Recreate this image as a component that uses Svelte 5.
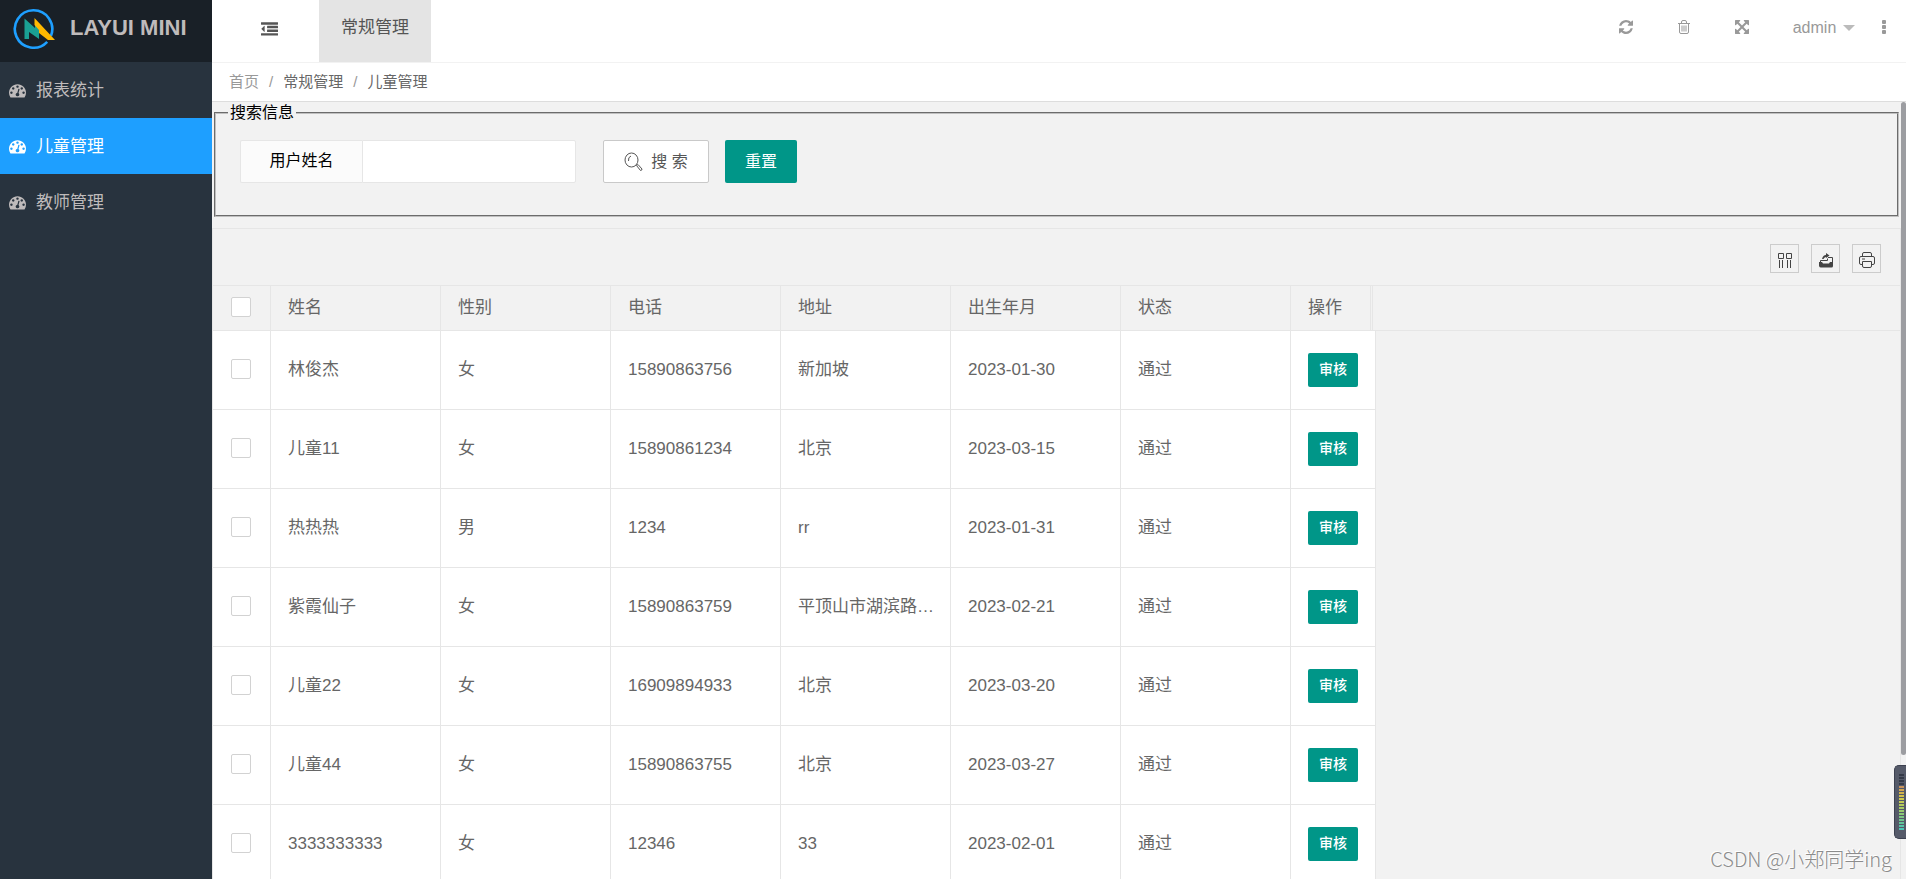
<script lang="ts">
  interface Child {
    id: number;
    name: string;
    sex: string;
    phone: string;
    address: string;
    birthday: string;
    status: string;
  }

  const menus = ['报表统计', '儿童管理', '教师管理'];
  const columns = ['姓名', '性别', '电话', '地址', '出生年月', '状态'];

  let activeMenu = '儿童管理';
  let keyword = '';
  let filter = '';
  let selected: number[] = [];

  let children: Child[] = [
    { id: 1, name: '林俊杰', sex: '女', phone: '15890863756', address: '新加坡', birthday: '2023-01-30', status: '通过' },
    { id: 2, name: '儿童11', sex: '女', phone: '15890861234', address: '北京', birthday: '2023-03-15', status: '通过' },
    { id: 3, name: '热热热', sex: '男', phone: '1234', address: 'rr', birthday: '2023-01-31', status: '通过' },
    { id: 4, name: '紫霞仙子', sex: '女', phone: '15890863759', address: '平顶山市湖滨路1号', birthday: '2023-02-21', status: '通过' },
    { id: 5, name: '儿童22', sex: '女', phone: '16909894933', address: '北京', birthday: '2023-03-20', status: '通过' },
    { id: 6, name: '儿童44', sex: '女', phone: '15890863755', address: '北京', birthday: '2023-03-27', status: '通过' },
    { id: 7, name: '3333333333', sex: '女', phone: '12346', address: '33', birthday: '2023-02-01', status: '通过' }
  ];

  $: rows = children.filter(c => c.name.includes(filter));
  $: allChecked = rows.length > 0 && rows.every(r => selected.includes(r.id));

  function search() {
    filter = keyword;
  }

  function reset() {
    keyword = '';
    filter = '';
  }

  function toggleAll() {
    selected = allChecked ? [] : rows.map(r => r.id);
  }

  function approve(id: number) {
    children = children.map(c => c.id === id ? { ...c, status: '通过' } : c);
  }

  // level meter, top to bottom
  const bars = [
    '#343a48', '#343a48', '#343a48', '#343a48', '#c9935c', '#d0a552', '#d2b34b',
    '#d3c04a', '#cfc94d', '#c3cc54', '#b5cd5c', '#a9cc65', '#9acb6e', '#8bc977', '#7cc782',
    '#6fc58d', '#62c49a', '#56c4a8', '#4dc6b6'
  ];
</script>

<div class="layout">
  <aside class="side">
    <a class="logo" href="#home">
      <svg width="44" height="44" viewBox="0 0 44 44">
        <path d="M35.2 35.8A18.7 18.7 0 1 1 38.9 30" fill="none" stroke="#1e9fff" stroke-width="2.6" />
        <path d="M12.5 12.5L23 22V18L27 23V33L17 26V33H12.5Z" fill="#1aa094" />
        <path d="M22.5 12L43 34H36L27 27V24L22.5 19Z" fill="#ffb800" />
      </svg>
      <h1>LAYUI MINI</h1>
    </a>
    <nav>
      {#each menus as menu}
        <a class="menu" class:active={menu === activeMenu} href="#{menu}" on:click={() => activeMenu = menu}>
          <svg width="17" height="17" viewBox="0 128 1792 1792" fill="currentColor">
            <path d="M384 1152q0-53-37.5-90.5t-90.5-37.5-90.5 37.5-37.5 90.5 37.5 90.5 90.5 37.5 90.5-37.5 37.5-90.5zm192-448q0-53-37.5-90.5t-90.5-37.5-90.5 37.5-37.5 90.5 37.5 90.5 90.5 37.5 90.5-37.5 37.5-90.5zm428 481l101-382q6-26-7.5-48.5t-38.5-29.5-48 6.5-30 39.5l-101 382q-60 5-107 43.5t-63 98.5q-20 77 20 146t117 89 146-20 89-117q16-60-6-117t-72-91zm660-33q0-53-37.5-90.5t-90.5-37.5-90.5 37.5-37.5 90.5 37.5 90.5 90.5 37.5 90.5-37.5 37.5-90.5zm-640-640q0-53-37.5-90.5t-90.5-37.5-90.5 37.5-37.5 90.5 37.5 90.5 90.5 37.5 90.5-37.5 37.5-90.5zm448 192q0-53-37.5-90.5t-90.5-37.5-90.5 37.5-37.5 90.5 37.5 90.5 90.5 37.5 90.5-37.5 37.5-90.5zm320 448q0 261-141 483-19 29-54 29h-1402q-35 0-54-29-141-221-141-483 0-182 71-348t191-286 286-191 348-71 348 71 286 191 191 286 71 348z" />
          </svg>
          <span>{menu}</span>
        </a>
      {/each}
    </nav>
  </aside>

  <div class="main">
    <header class="header">
      <button class="fold" aria-label="收起菜单">
        <svg width="17" height="17" viewBox="0 0 1792 1792" fill="currentColor">
          <path d="M384 544v576q0 13-9.5 22.5t-22.5 9.5q-14 0-23-9l-288-288q-9-9-9-23t9-23l288-288q9-9 23-9 13 0 22.5 9.5t9.5 22.5z" />
          <rect y="128" width="1792" height="256" rx="32" />
          <rect x="640" y="512" width="1152" height="256" rx="32" />
          <rect x="640" y="896" width="1152" height="256" rx="32" />
          <rect y="1280" width="1792" height="256" rx="32" />
        </svg>
      </button>
      <a class="tab" href="#normal">常规管理</a>
      <div class="tools">
        <button class="tool" aria-label="刷新">
          <svg width="14" height="14" viewBox="0 0 1536 1536" fill="currentColor">
            <path d="M1511 928q0 5-1 7-64 268-268 434.5t-478 166.5q-146 0-282.5-55t-243.5-157l-129 129q-19 19-45 19t-45-19-19-45v-448q0-26 19-45t45-19h448q26 0 45 19t19 45-19 45l-137 137q71 66 161 102t187 36q134 0 250-65t186-179q11-17 53-117 8-23 30-23h192q13 0 22.5 9.5t9.5 22.5zm25-800v448q0 26-19 45t-45 19h-448q-26 0-45-19t-19-45 19-45l138-138q-148-137-349-137-134 0-250 65t-186 179q-11 17-53 117-8 23-30 23h-199q-13 0-22.5-9.5t-9.5-22.5v-7q65-268 270-434.5t480-166.5q146 0 284 55.5t245 156.5l130-129q19-19 45-19t45 19 19 45z" />
          </svg>
        </button>
        <button class="tool" aria-label="清理">
          <svg width="14" height="14" viewBox="0 0 14 14" fill="none" stroke="currentColor">
            <path d="M1 3.5H13M4.5 3.5V2Q4.5.5 6 .5H8Q9.5.5 9.5 2V3.5M2.5 3.5V12Q2.5 13.5 4 13.5H10Q11.5 13.5 11.5 12V3.5M5 5.5V11.5M7 5.5V11.5M9 5.5V11.5" />
          </svg>
        </button>
        <button class="tool" aria-label="全屏">
          <svg width="14" height="14" viewBox="128 128 1536 1536" fill="currentColor">
            <path d="M1411 541l-355 355 355 355 144-144q29-31 70-14 39 17 39 59v448q0 26-19 45t-45 19h-448q-42 0-59-40-17-39 14-69l144-144-355-355-355 355 144 144q31 30 14 69-17 40-59 40h-448q-26 0-45-19t-19-45v-448q0-42 40-59 39-17 69 14l144 144 355-355-355-355-144 144q-19 19-45 19-12 0-24-5-40-17-40-59v-448q0-26 19-45t45-19h448q42 0 59 40 17 39-14 69l-144 144 355 355 355-355-144-144q-31-30-14-69 17-40 59-40h448q26 0 45 19t19 45v448q0 42-39 59-13 5-25 5-26 0-45-19z" />
          </svg>
        </button>
        <button class="user">admin <i class="caret"></i></button>
        <button class="more" aria-label="更多">
          <svg width="4" height="14" viewBox="0 0 4 14" fill="currentColor">
            <rect width="4" height="4" rx="1" />
            <rect y="5" width="4" height="4" rx="1" />
            <rect y="10" width="4" height="4" rx="1" />
          </svg>
        </button>
      </div>
    </header>

    <div class="crumbs">
      <a class="home" href="#home">首页</a>
      <span>/</span>
      <a href="#normal">常规管理</a>
      <span>/</span>
      <a href="#children">儿童管理</a>
    </div>

    <div class="body">
      <div class="page">
        <fieldset>
          <legend>搜索信息</legend>
          <form class="search" on:submit|preventDefault={search}>
            <label for="username">用户姓名</label>
            <input id="username" type="text" autocomplete="off" bind:value={keyword} />
            <button class="btn-search" type="submit">
              <svg width="19" height="19" viewBox="0 0 19 19" fill="none" stroke="currentColor">
                <ellipse cx="7.5" cy="8" rx="6.5" ry="7" />
                <path d="M4.5 9Q4 5 7 4M12.5 13.5L14 12.5L18 17Q18 18.5 16.5 18.5Z" />
              </svg>
              搜 索
            </button>
            <button class="btn-reset" type="button" on:click={reset}>重置</button>
          </form>
        </fieldset>

        <div class="table-view">
          <div class="toolbar">
            <button aria-label="筛选列">
              <svg width="16" height="16" viewBox="0 0 16 16" fill="none" stroke="currentColor">
                <path d="M1.5 1.5H6.5V6.5H1.5ZM9.5 1.5H14.5V6.5H9.5ZM2.5 8V16M5.5 8V16M10.5 8V16M13.5 8V16" />
              </svg>
            </button>
            <button aria-label="导出">
              <svg width="16" height="16" viewBox="0 0 16 16" fill="currentColor">
                <path d="M1 10H4L5 11.5H11L12 10H15V14Q15 15.5 13.5 15.5H3Q1.5 15.5 1 14Z" />
                <path d="M4 7Q5 3 8 3V1L11.5 3.5L8 6V5Q6 5.500 5.5 7Z" />
                <path d="M2.5 10V8.5H9.5V6.500M10 5.5H14.5V10" fill="none" stroke="currentColor" />
              </svg>
            </button>
            <button aria-label="打印">
              <svg width="16" height="16" viewBox="0 0 16 16" fill="none" stroke="currentColor">
                <path d="M3.5 4.5V2Q3.5.5 5 .5H11Q12.5.5 12.5 2V4.5M3.5 12.5H2Q.5 12.5.5 11V6Q.5 4.5 2 4.5H14Q15.5 4.5 15.5 6V11Q15.5 12.5 14 12.5H12.5M3.5 9.5H12.5V14Q12.5 15.5 11 15.5H5Q3.5 15.5 3.5 14ZM3 7H6" />
              </svg>
            </button>
          </div>

          <div class="table-head">
            <table>
              <thead>
                <tr>
                  <th class="check"><input type="checkbox" aria-label="全选" checked={allChecked} on:change={toggleAll} /></th>
                  {#each columns as column}
                    <th class="col">{column}</th>
                  {/each}
                  <th class="action">操作</th>
                </tr>
              </thead>
            </table>
            <div class="patch"></div>
          </div>

          <table class="table-body">
            <tbody>
              {#each rows as row (row.id)}
                <tr>
                  <td class="check"><input type="checkbox" aria-label={row.name} value={row.id} bind:group={selected} /></td>
                  <td class="col">{row.name}</td>
                  <td class="col">{row.sex}</td>
                  <td class="col">{row.phone}</td>
                  <td class="col">{row.address}</td>
                  <td class="col">{row.birthday}</td>
                  <td class="col">{row.status}</td>
                  <td class="action"><button on:click={() => approve(row.id)}>审核</button></td>
                </tr>
              {/each}
            </tbody>
          </table>
        </div>
      </div>
      <div class="scroll"><div class="thumb"></div></div>
    </div>
  </div>

  <div class="meter">
    {#each bars as color}
      <i style="background: {color}"></i>
    {/each}
  </div>
  <div class="watermark">CSDN @小郑同学ing</div>
</div>

<style>
  :global(body) {
    font-family: "Liberation Sans", "Noto Sans CJK SC", sans-serif;
    font-size: 16px;
    line-height: 24px;
    background: #f2f2f2;
  }
  .layout {
    position: relative;
    display: flex;
    height: 100vh;
    overflow: hidden;
  }
  a {
    color: inherit;
    text-decoration: none;
  }
  button {
    padding: 0;
    border: none;
    background: none;
    color: inherit;
    font-family: inherit;
    font-size: 16px;
    line-height: 24px;
    cursor: pointer;
  }
  svg {
    display: block;
    flex: none;
  }

  /* sidebar */
  .side {
    flex: none;
    width: 212px;
    background: #28333e;
  }
  .logo {
    display: flex;
    align-items: center;
    gap: 14px;
    height: 62px;
    box-sizing: border-box;
    padding: 0 0 6px 12px;
    background: #192027;
    color: #bfbbbb;
  }
  h1 {
    margin: 0;
    font-size: 22px;
    line-height: 32px;
    white-space: nowrap;
  }
  .menu {
    display: flex;
    align-items: center;
    gap: 10px;
    box-sizing: border-box;
    height: 56px;
    padding: 2px 0 0 9px;
    color: #bfbbbb;
    font-size: 17px;
  }
  .menu.active {
    background: #1e9fff;
    color: #fff;
  }

  /* header */
  .main {
    flex: 1;
    min-width: 0;
    display: flex;
    flex-direction: column;
  }
  .header {
    flex: none;
    display: flex;
    height: 62px;
    border-bottom: 1px solid #f2f2f2;
    background: #fff;
  }
  .header button,
  .tab {
    display: flex;
    align-items: center;
    justify-content: center;
    box-sizing: border-box;
    padding-bottom: 8px;
  }
  .header .fold {
    width: 107px;
    padding-left: 8px;
    padding-bottom: 4px;
    color: #555;
  }
  .tab {
    width: 112px;
    padding-bottom: 6px;
    background: #e4e4e4;
    color: #555;
    font-size: 17px;
  }
  .tools {
    display: flex;
    margin-left: auto;
    color: #999;
  }
  .tool {
    width: 58px;
  }
  .header .user {
    width: 90px;
    gap: 7px;
    padding-left: 16px;
    padding-bottom: 6px;
  }
  .caret {
    border: 6px solid transparent;
    border-top-color: #bbb;
    border-bottom: none;
  }
  .more {
    width: 45px;
  }
  .crumbs {
    flex: none;
    display: flex;
    align-items: center;
    gap: 10px;
    height: 38px;
    padding-left: 17px;
    border-bottom: 1px solid #ddd;
    background: #fff;
    color: #666;
    font-size: 15px;
  }
  .crumbs .home,
  .crumbs span {
    color: #999;
  }

  .body {
    flex: 1;
    min-height: 0;
    display: flex;
  }
  .page {
    flex: 1;
    min-width: 0;
    overflow: hidden;
  }
  .scroll {
    width: 5px;
  }
  .thumb {
    height: 84%;
    border-radius: 3px;
    background: #9c9da1;
  }

  /* search form */
  fieldset {
    margin: 0 2px 11px;
    padding: 16px 12px 32px;
    border: 2px groove #c0c0c0;
  }
  legend {
    padding: 0 2px;
    line-height: 22px;
  }
  .search {
    display: flex;
    height: 43px;
    padding-left: 12px;
  }
  .search label {
    box-sizing: border-box;
    width: 122px;
    padding-top: 8px;
    border: 1px solid #e6e6e6;
    border-right: none;
    border-radius: 2px 0 0 2px;
    background: #fbfbfb;
    text-align: center;
  }
  .search input {
    box-sizing: border-box;
    width: 214px;
    margin-right: 27px;
    padding: 0 10px;
    border: 1px solid #e6e6e6;
    border-radius: 0 2px 2px 0;
    background: #fff;
    font-size: 16px;
    outline: none;
  }
  .btn-search {
    display: flex;
    align-items: center;
    justify-content: center;
    gap: 8px;
    width: 106px;
    margin-right: 16px;
    border: 1px solid #c9c9c9;
    border-radius: 2px;
    background: #fff;
    color: #555;
  }
  .btn-reset {
    width: 72px;
    border-radius: 2px;
    background: #009688;
    color: #fff;
  }

  /* table */
  .table-view {
    border: 1px solid #e6e6e6;
    color: #666;
  }
  .toolbar {
    display: flex;
    justify-content: flex-end;
    gap: 12px;
    padding: 15px 19px 12px;
    border-bottom: 1px solid #e6e6e6;
  }
  .toolbar button {
    display: flex;
    align-items: center;
    justify-content: center;
    box-sizing: border-box;
    width: 29px;
    height: 29px;
    padding-top: 2px;
    border: 1px solid #ccc;
    color: #444;
  }
  .table-head {
    display: flex;
    border-bottom: 1px solid #e6e6e6;
  }
  .patch {
    margin-left: 1px;
    border-left: 1px solid #e6e6e6;
  }
  table {
    table-layout: fixed;
    width: min-content;
    border-spacing: 0;
    font-size: 17px;
  }
  th,
  td {
    box-sizing: border-box;
    padding: 0 15px 0 17px;
    border-right: 1px solid #e6e6e6;
    font-weight: 400;
    text-align: left;
    white-space: nowrap;
    overflow: hidden;
    text-overflow: ellipsis;
  }
  th {
    height: 44px;
  }
  td {
    height: 79px;
    border-bottom: 1px solid #e6e6e6;
    background: #fff;
  }
  .check {
    width: 58px;
    min-width: 58px;
  }
  .col {
    width: 170px;
    min-width: 170px;
    max-width: 170px;
  }
  th.action {
    width: 80px;
    min-width: 80px;
  }
  td.action {
    width: 85px;
    min-width: 85px;
  }
  .check input {
    appearance: none;
    display: block;
    box-sizing: border-box;
    width: 20px;
    height: 20px;
    margin: 0 0 2px 1px;
    border: 1px solid #d2d2d2;
    border-radius: 2px;
    background: #fff;
  }
  .check input:checked {
    border-color: #5fb878;
    background: #5fb878;
  }
  .action button {
    display: block;
    width: 50px;
    height: 34px;
    padding-bottom: 2px;
    border-radius: 2px;
    background: #009688;
    color: #fff;
    font-size: 14px;
    font-weight: 500;
  }

  /* floating bits */
  .meter {
    position: absolute;
    right: 0;
    bottom: 40px;
    display: flex;
    flex-direction: column;
    gap: 1px;
    padding: 8px 2px 8px 4px;
    border: 1px solid #3c4150;
    border-right: none;
    border-radius: 5px 0 0 5px;
    background: #555a69;
  }
  .meter i {
    width: 5px;
    height: 2px;
  }
  .watermark {
    position: absolute;
    right: 14px;
    bottom: 8px;
    color: #8c8c8c;
    font-family: "Noto Sans CJK SC", sans-serif;
    font-size: 20px;
    font-weight: 300;
    text-shadow: -1px -1px 0 #fff;
  }
</style>
